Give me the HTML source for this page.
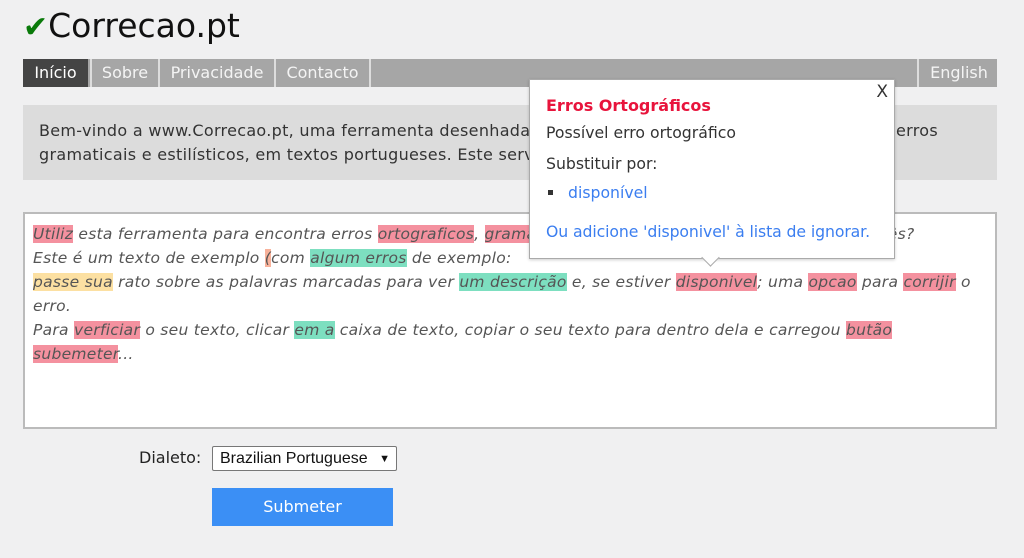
<!DOCTYPE html>
<html><head><meta charset="utf-8"><style>
body{margin:0;width:1024px;height:558px;background:#f0f0f1;font-family:"DejaVu Sans","Liberation Sans",sans-serif;overflow:hidden;position:relative;color:#333}
.a{position:absolute}
#logo{left:23px;top:6px;font-size:33px;color:#111;letter-spacing:0px}
#logo span{color:#0a7a0a;font-size:30px}
#nav{left:23px;top:59px;width:974px;height:28px;background:#a6a6a6;font-size:16px}
#nav div{position:absolute;top:0;height:28px;line-height:28px;color:#f4f4f4;text-align:center}
#info{left:23px;top:105px;width:974px;height:75px;background:#dcdcdc;font-size:16px;line-height:24px}
#info p{margin:0;padding:14px 16px;letter-spacing:0.3px}
#ta{left:23px;top:212px;width:970px;height:213px;background:#fff;border:2px solid #bbb;font-size:15.5px;line-height:24px;font-style:italic;color:#555}
#ta p{margin:0;padding:8px 8px;letter-spacing:0.28px;white-space:nowrap}
.r{background:#f4919f}.g{background:#7ddfc0}.y{background:#fce0a2}.o{background:#f8b29b}
#pop{left:529px;top:79px;width:364px;height:178px;background:#fff;border:1px solid #aaa;font-size:15.7px;box-shadow:0 1px 3px rgba(0,0,0,.2)}
</style></head><body>
<div class="a" id="logo"><span>✔</span>Correcao.pt</div>
<div class="a" id="nav">
<div style="left:0;width:65px;background:#444;color:#fff">Início</div>
<div style="left:67px;width:66px;border-left:2px solid #ddd">Sobre</div>
<div style="left:135px;width:114px;border-left:2px solid #ddd">Privacidade</div>
<div style="left:251px;width:93px;border-left:2px solid #ddd;border-right:2px solid #ddd">Contacto</div>
<div style="left:894px;width:80px;border-left:2px solid #ddd">English</div>
</div>
<div class="a" id="info"><p>Bem-vindo a www.Correcao.pt, uma ferramenta desenhada para ajudar a encontrar erros ortográficos, erros gramaticais e estilísticos, em textos portugueses. Este serviço é gratuito.</p></div>
<div class="a" id="ta"><p><span class="r">Utiliz</span> esta ferramenta para encontra erros <span class="r">ortograficos</span>, <span class="r">gramaticais</span> e estilísticos no seu texto em português?<br>Este é um texto de exemplo <span class="o">(</span>com <span class="g">algum erros</span> de exemplo:<br><span class="y">passe sua</span> rato sobre as palavras marcadas para ver <span class="g">um descrição</span> e, se estiver <span class="r">disponivel</span>; uma <span class="r">opcao</span> para <span class="r">corrijir</span> o<br>erro.<br>Para <span class="r">verficiar</span> o seu texto, clicar <span class="g">em a</span> caixa de texto, copiar o seu texto para dentro dela e carregou <span class="r">butão</span><br><span class="r">subemeter</span>...</p></div>
<div class="a" id="pop">
<div class="a" style="right:6px;top:2px;font-size:17px;color:#333">X</div>
<div class="a" style="left:16px;top:16px;color:#e8143c;font-weight:bold;font-size:16px">Erros Ortográficos</div>
<div class="a" style="left:16px;top:43px">Possível erro ortográfico</div>
<div class="a" style="left:16px;top:74px">Substituir por:</div>
<div class="a" style="left:18px;top:110px;width:5px;height:5px;background:#333"></div>
<div class="a" style="left:38px;top:103px;color:#3b7ef0">disponível</div>
<div class="a" style="left:16px;top:142px;color:#3b7ef0;letter-spacing:-0.1px">Ou adicione 'disponivel' à lista de ignorar.</div>
<div class="a" style="left:174px;top:171px;width:12px;height:12px;background:#fff;border-right:1px solid #aaa;border-bottom:1px solid #aaa;transform:rotate(45deg)"></div>
</div>
<div class="a" style="left:139px;top:448px;font-size:16px;color:#222">Dialeto:</div>
<div class="a" style="left:212px;top:446px;width:185px;height:25px;border:1px solid #777;border-radius:2px;background:#fff;font-family:'Liberation Sans',sans-serif;font-size:16px;line-height:24px;box-sizing:border-box;padding-left:7px;color:#111">Brazilian Portuguese<span style="position:absolute;right:6px;top:0;font-size:11px">▼</span></div>
<div class="a" style="left:212px;top:488px;width:181px;height:38px;background:#3b8ff5;color:#fff;font-size:16px;line-height:38px;text-align:center">Submeter</div>
</body></html>
